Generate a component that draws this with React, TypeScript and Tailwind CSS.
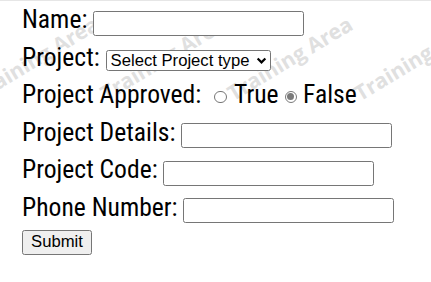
const marks = [-30, 97, 224, 351];

function Field() {
  return (
    <input className="w-[211px] h-[25px] mt-[9.5px] align-top border border-[#767676] rounded-[2.5px] bg-white" />
  );
}

export default function App() {
  return (
    <div className="relative min-h-screen w-full overflow-hidden bg-white border-t border-[#e6e6e6]">
      {/* watermark */}
      {marks.map((x) => (
        <span
          key={x}
          className="absolute origin-top-left -rotate-[31deg] whitespace-nowrap font-['Open_Sans'] font-bold text-[21px] leading-none text-[#e0e0e0] select-none"
          style={{ left: x, top: 85 }}
        >
          Training Area
        </span>
      ))}

      <form className="relative pl-[22px] font-['Roboto'] text-[25.6px] leading-[37.5px] text-black [font-stretch:condensed]">
        <div>
          Name: <Field />
        </div>
        <div>
          Project:{' '}
          <span className="relative inline-block align-top mt-[11.5px]">
            <select className="block appearance-none w-[165px] h-[21px] pl-[4px] border border-[#767676] rounded-[2.5px] bg-white font-['Liberation_Sans'] text-[16.67px] leading-[19px] text-black">
              <option>Select Project type</option>
            </select>
            <svg className="absolute right-[4px] top-[5px] w-[11px] h-[11px] pointer-events-none" viewBox="0 0 12 12">
              <path d="M1.8 3.8l4.2 4.2 4.2-4.2" fill="none" stroke="black" strokeWidth="2.4" />
            </svg>
          </span>
        </div>
        <div>
          Project Approved:{' '}
          <span className="inline-block w-[12.5px] h-[12.5px] ml-[7px] mr-[2px] rounded-full border border-[#767676] bg-white" />{' '}
          True
          <span className="inline-block w-[12.5px] h-[12.5px] ml-[6px] mr-[6px] p-[1.75px] rounded-full border-[1.5px] border-[#7a7a7a] bg-white">
            <span className="block w-full h-full rounded-full bg-[#7a7a7a]" />
          </span>
          False
        </div>
        <div>
          Project Details: <Field />
        </div>
        <div>
          Project Code: <Field />
        </div>
        <div>
          Phone Number: <Field />
        </div>
        <div className="leading-none">
          <button
            type="button"
            className="w-[70px] h-[25.5px] border border-[#767676] rounded-[2.5px] bg-[#efefef] font-['Liberation_Sans'] text-[16.67px] text-black"
          >
            Submit
          </button>
        </div>
      </form>
    </div>
  );
}
